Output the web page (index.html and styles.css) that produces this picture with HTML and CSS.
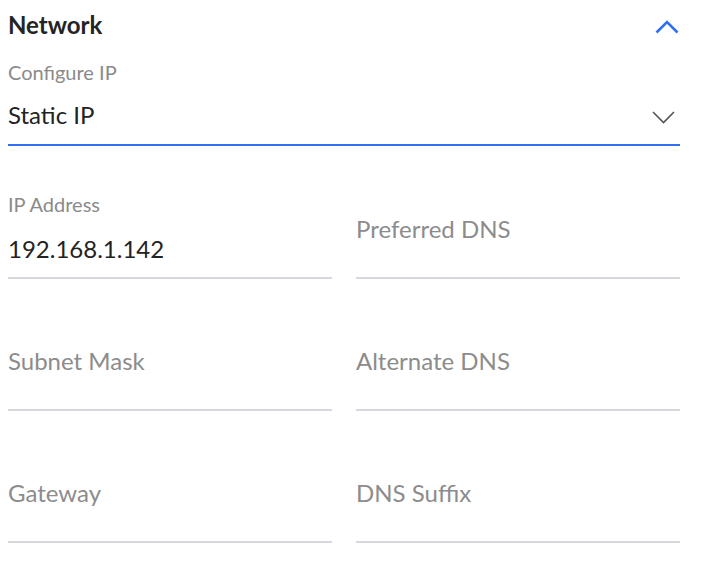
FILE: index.html
```html
<!DOCTYPE html>
<html lang="en">
<head>
<meta charset="utf-8">
<title>Network</title>
<link rel="stylesheet" href="styles.css">
</head>
<body>
<section class="panel">
  <header class="panel-header">
    <h2 class="panel-title">Network</h2>
    <button class="collapse-btn" aria-label="Collapse">
      <svg width="24" height="14" viewBox="0 0 24 14"><path d="M1.5 12.5 L12 2 L22.5 12.5" fill="none" stroke="#2f6ff0" stroke-width="2.6"/></svg>
    </button>
  </header>

  <div class="select-field">
    <div class="field-label">Configure IP</div>
    <div class="select-row">
      <span class="select-value">Static IP</span>
      <svg class="select-caret" width="23" height="13" viewBox="0 0 23 13"><path d="M1 1 L11.5 11.5 L22 1" fill="none" stroke="#555" stroke-width="1.6"/></svg>
    </div>
  </div>

  <div class="fields-grid">
    <div class="field">
      <div class="field-label">IP Address</div>
      <div class="field-value">192.168.1.142</div>
    </div>
    <div class="field field-empty"><span class="placeholder">Preferred DNS</span></div>
    <div class="field field-empty"><span class="placeholder">Subnet Mask</span></div>
    <div class="field field-empty"><span class="placeholder">Alternate DNS</span></div>
    <div class="field field-empty"><span class="placeholder">Gateway</span></div>
    <div class="field field-empty"><span class="placeholder">DNS Suffix</span></div>
  </div>
</section>
</body>
</html>
```

FILE: styles.css
```css
* { box-sizing: border-box; }

html, body {
  margin: 0;
  padding: 0;
  background: #ffffff;
}

body {
  font-family: Lato, "Open Sans", sans-serif;
  color: #222222;
}

.panel {
  width: 716px;
  padding: 7px 36px 0 8px;
}

.panel-header {
  display: flex;
  align-items: center;
  justify-content: space-between;
  height: 36px;
}

.panel-title {
  margin: 0;
  font-size: 24px;
  line-height: 36px;
  font-weight: 700;
  color: #242424;
}

.collapse-btn {
  border: 0;
  background: none;
  padding: 0;
  margin: 3px 1px 0 0;
  display: flex;
  cursor: pointer;
}

.field-label {
  font-size: 20px;
  line-height: 24px;
  color: #8a8a8a;
}

.select-field {
  margin-top: 17px;
}

.select-field .field-label {
  margin-bottom: 15px;
}

.select-row {
  display: flex;
  align-items: center;
  justify-content: space-between;
  padding-bottom: 13px;
  border-bottom: 2px solid #2f6ff0;
}

.select-value {
  font-size: 24px;
  line-height: 32px;
  color: #222222;
}

.select-caret {
  margin: 5px 5px 0 0;
}

.fields-grid {
  display: grid;
  grid-template-columns: 1fr 1fr;
  column-gap: 24px;
  row-gap: 45px;
  margin-top: 46px;
}

.field {
  height: 87px;
  border-bottom: 2px solid #d5d8de;
}

.field .field-label {
  margin-bottom: 17px;
}

.field-value {
  font-size: 24px;
  line-height: 32px;
  color: #222222;
}

.field-empty {
  padding-top: 21px;
}

.placeholder {
  display: block;
  font-size: 24px;
  line-height: 32px;
  color: #8c8c8c;
}
```
